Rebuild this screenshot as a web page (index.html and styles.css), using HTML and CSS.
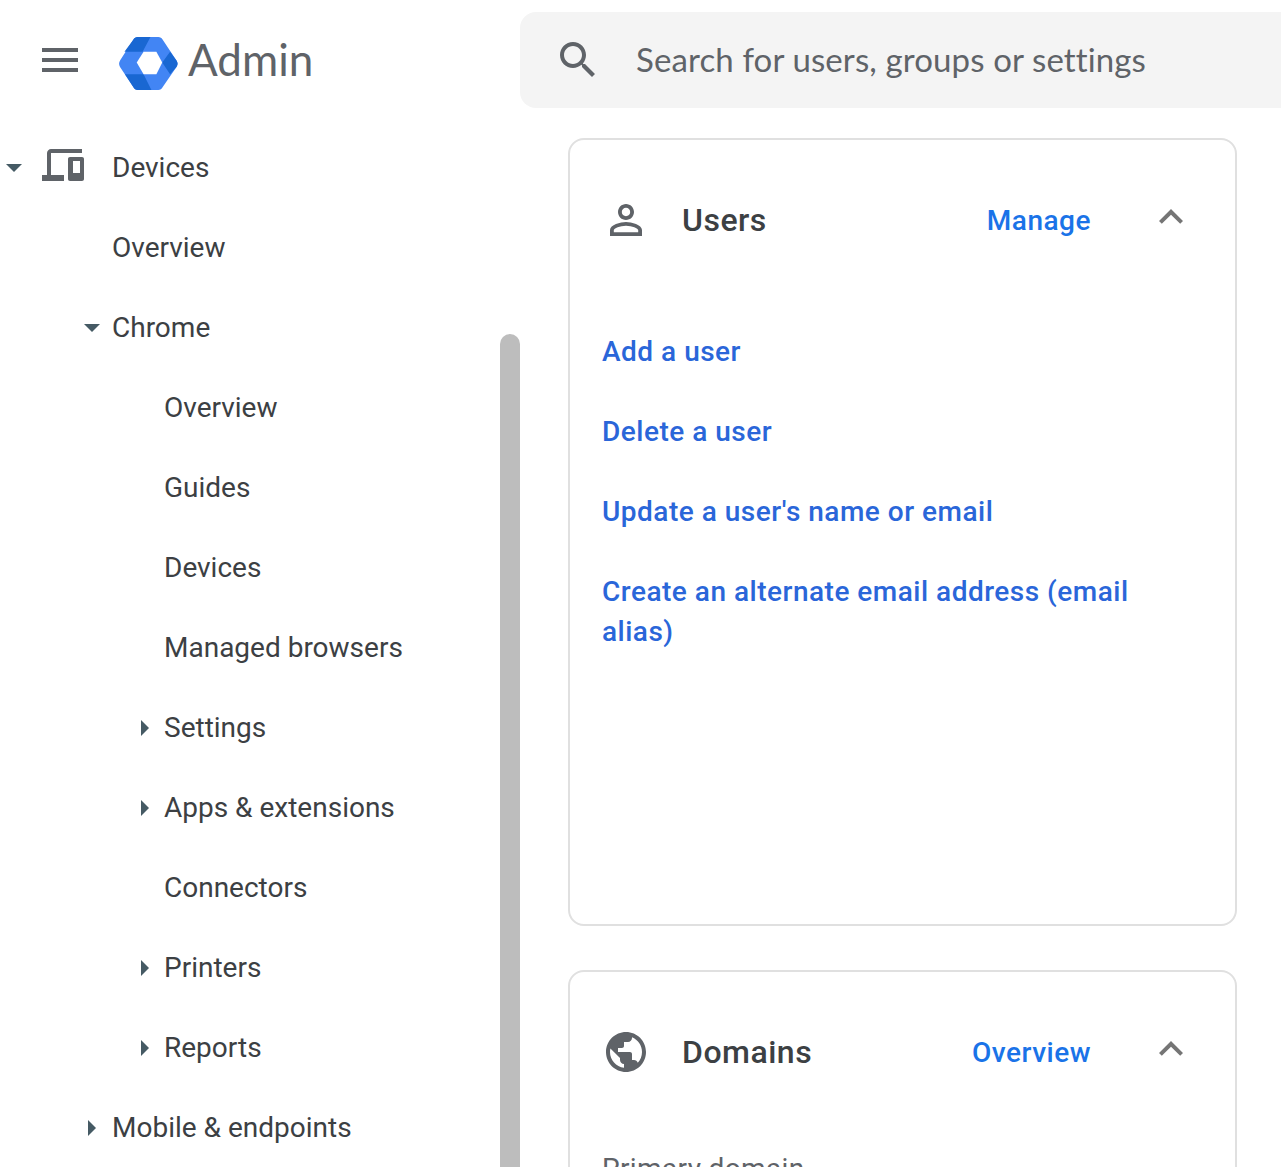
FILE: index.html
```html
<!DOCTYPE html>
<html lang="en">
<head>
<meta charset="utf-8">
<title>Admin</title>
<link rel="stylesheet" href="styles.css">
</head>
<body>
<div class="page">
  <header class="topbar">
    <div class="brand">
      <svg class="menu-icon" viewBox="0 0 24 24"><path d="M3 18h18v-2H3v2zm0-5h18v-2H3v2zm0-7v2h18V6H3z"/></svg>
      <svg class="logo" viewBox="0 0 60 54">
        <path fill="#4285f4" d="M19 0h21c2 0 3.500 1 4.500 2.700L58.500 24c1.500 2.500 1.500 4 0 6.500L44.500 51c-1 2-2.500 3-4.500 3H19c-2 0-3.500-1-4.500-3L1 30.500c-1.300-2.300-1.300-4.200 0-6.500L14.500 2.700C15.500 1 17 0 19 0z"/>
        <path fill="#1967d2" d="M19 0h13L24 15H5.500l9-12.300C15.500 1 17 0 19 0zM6 38h19l8 16H19c-2 0-3.500-1-4.500-3zM52 15l6.500 9c1.500 2.500 1.500 4 0 6.500L52 38 44 26z"/>
        <path fill="#fff" d="M25 15h13l6 11-6 12H25l-7-12z"/>
      </svg>
      <span class="brand-name">Admin</span>
    </div>
    <div class="search">
      <svg class="search-icon" viewBox="0 0 24 24"><path d="M15.500 14h-.79l-.28-.27C15.410 12.590 16 11.110 16 9.500 16 5.910 13.090 3 9.500 3S3 5.910 3 9.500 5.910 16 9.500 16c1.610 0 3.090-.59 4.230-1.570l.27.28v.79l5 4.990L20.490 19l-4.990-5zm-6 0C7.010 14 5 11.990 5 9.500S7.010 5 9.500 5 14 7.010 14 9.500 11.990 14 9.500 14z"/></svg>
      <span class="search-text">Search for users, groups or settings</span>
    </div>
  </header>
  <div class="body">
    <nav class="sidebar">
      <div class="row">
        <div class="lead lead-top">
          <span class="caret-down"></span>
          <svg class="devices-icon" viewBox="0 0 42 32"><path fill-rule="evenodd" d="M9 0h31v4H9v22h13v6H0v-6h5V4c0-2 2-4 4-4zM28 8h12c1.200 0 2 .8 2 2v20c0 1.200-.8 2-2 2H28c-1.200 0-2-.8-2-2V10c0-1.200.8-2 2-2zm3 4v12h7V12z"/></svg>
        </div>
        <span>Devices</span>
      </div>
      <div class="row"><div class="lead"></div><span>Overview</span></div>
      <div class="row"><div class="lead"><span class="caret-down"></span></div><span>Chrome</span></div>
      <div class="row"><div class="lead deep"></div><span>Overview</span></div>
      <div class="row"><div class="lead deep"></div><span>Guides</span></div>
      <div class="row"><div class="lead deep"></div><span>Devices</span></div>
      <div class="row"><div class="lead deep"></div><span>Managed browsers</span></div>
      <div class="row"><div class="lead deep"><span class="caret-right"></span></div><span>Settings</span></div>
      <div class="row"><div class="lead deep"><span class="caret-right"></span></div><span>Apps &amp; extensions</span></div>
      <div class="row"><div class="lead deep"></div><span>Connectors</span></div>
      <div class="row"><div class="lead deep"><span class="caret-right"></span></div><span>Printers</span></div>
      <div class="row"><div class="lead deep"><span class="caret-right"></span></div><span>Reports</span></div>
      <div class="row"><div class="lead lead-wide"><span class="caret-right"></span></div><span>Mobile &amp; endpoints</span></div>
      <div class="scroll-thumb"></div>
    </nav>
    <main class="content">
      <section class="card card-users">
        <div class="card-head">
          <svg class="card-icon" viewBox="0 0 24 24"><path d="M12 5.900c1.160 0 2.100.94 2.100 2.100s-.94 2.100-2.100 2.100S9.900 9.160 9.900 8s.94-2.100 2.100-2.100m0 9c2.970 0 6.100 1.460 6.100 2.100v1.100H5.900V17c0-.64 3.130-2.100 6.100-2.100M12 4C9.790 4 8 5.790 8 8s1.790 4 4 4 4-1.790 4-4-1.790-4-4-4zm0 9c-2.670 0-8 1.340-8 4v3h16v-3c0-2.660-5.330-4-8-4z"/></svg>
          <h2 class="card-title">Users</h2>
          <a class="card-action">Manage</a>
          <svg class="chevron" viewBox="0 0 24 24"><path d="M12 8l-6 6 1.410 1.410L12 10.830l4.590 4.580L18 14z"/></svg>
        </div>
        <ul class="links">
          <li><a>Add a user</a></li>
          <li><a>Delete a user</a></li>
          <li><a>Update a user's name or email</a></li>
          <li><a>Create an alternate email address (email alias)</a></li>
        </ul>
      </section>
      <section class="card card-domains">
        <div class="card-head">
          <svg class="card-icon" viewBox="0 0 24 24"><path d="M12 2C6.480 2 2 6.480 2 12s4.480 10 10 10 10-4.480 10-10S17.520 2 12 2zm-1 17.930c-3.950-.49-7-3.850-7-7.930 0-.62.08-1.210.21-1.790L9 15v1c0 1.100.9 2 2 2v1.930zm6.900-2.540c-.26-.81-1-1.390-1.900-1.390h-1v-3c0-.55-.45-1-1-1H8v-2h2c.55 0 1-.45 1-1V7h2c1.100 0 2-.9 2-2v-.41c2.930 1.190 5 4.060 5 7.410 0 2.080-.8 3.970-2.100 5.390z"/></svg>
          <h2 class="card-title">Domains</h2>
          <a class="card-action">Overview</a>
          <svg class="chevron" viewBox="0 0 24 24"><path d="M12 8l-6 6 1.410 1.410L12 10.830l4.590 4.580L18 14z"/></svg>
        </div>
        <p class="domain-label">Primary domain</p>
      </section>
    </main>
  </div>
</div>
</body>
</html>
```
FILE: styles.css
```css
* { box-sizing: border-box; }
html, body { margin: 0; padding: 0; height: 100%; overflow: hidden; background: #fff; }
body { font-family: Roboto, "Liberation Sans", sans-serif; color: #3c4043; }
.page { width: 1281px; height: 1167px; overflow: hidden; }

.topbar { display: flex; height: 120px; padding-top: 12px; }
.brand { display: flex; align-items: center; width: 520px; height: 96px; padding-left: 36px; }
.menu-icon { width: 48px; height: 48px; fill: #5f6368; }
.logo { width: 59px; height: 53px; margin-left: 35px; margin-top: 7px; }
.brand-name { margin-left: 10px; margin-top: -2px; font-family: Lato, sans-serif; font-size: 44px; color: #5f6368; line-height: 1; }
.search { flex: 1; height: 96px; display: flex; align-items: center; background: #f4f4f4; border-radius: 16px 0 0 16px; padding-left: 34px; }
.search-icon { width: 48px; height: 48px; fill: #5f6368; }
.search-text { margin-left: 34px; margin-top: -2px; font-family: Lato, sans-serif; font-size: 33px; font-variant-ligatures: none; letter-spacing: .12px; color: #5f6368; }

.body { display: flex; }
.sidebar { position: relative; width: 520px; height: 1047px; padding-top: 7px; flex: none; }
.row { display: flex; align-items: center; height: 80px; font-size: 28px; color: #3c4043; }
.lead { width: 112px; flex: none; display: flex; align-items: center; justify-content: flex-end; padding-right: 12px; }
.lead.deep { width: 164px; padding-right: 15px; }
.lead.lead-wide { padding-right: 16px; }
.lead-top { justify-content: flex-start; padding: 0 0 0 6px; }
.caret-down { width: 0; height: 0; margin-top: 2px; border-left: 8px solid transparent; border-right: 8px solid transparent; border-top: 8px solid #455a64; }
.caret-right { width: 0; height: 0; margin-top: 2px; border-top: 8px solid transparent; border-bottom: 8px solid transparent; border-left: 8px solid #455a64; }
.devices-icon { width: 42px; height: 32px; margin-left: 20px; margin-top: -4px; fill: #5f6368; }
.scroll-thumb { position: absolute; left: 500px; top: 214px; width: 20px; height: 900px; background: #bdbdbd; border-radius: 10px; }

.content { flex: none; width: 669px; margin-left: 48px; padding-top: 18px; }
.card { border: 2px solid #e0e0e0; border-radius: 16px; padding: 0 40px 0 32px; margin-bottom: 44px; background: #fff; }
.card-users { height: 788px; }
.card-domains { height: 400px; }
.card-head { display: flex; align-items: center; height: 48px; margin-top: 56px; }
.card-icon { width: 48px; height: 48px; fill: #5f6368; flex: none; }
.card-title { margin: 0 0 0 32px; flex: 1; font-size: 32px; font-weight: 500; letter-spacing: .5px; color: #3c4043; }
.card-action { font-size: 28px; font-weight: 500; color: #1a73e8; letter-spacing: .5px; margin-right: 56px; }
.chevron { width: 48px; height: 48px; fill: #757575; flex: none; margin-top: -6px; }
.links { list-style: none; margin: 88px 0 0; padding: 0; font-size: 28px; font-weight: 500; line-height: 40px; letter-spacing: .5px; color: #2a66d9; }
.links li { margin-bottom: 40px; }
.domain-label { margin: 73px 0 0; font-size: 28px; line-height: 40px; letter-spacing: .36px; color: #5f6368; }
```
